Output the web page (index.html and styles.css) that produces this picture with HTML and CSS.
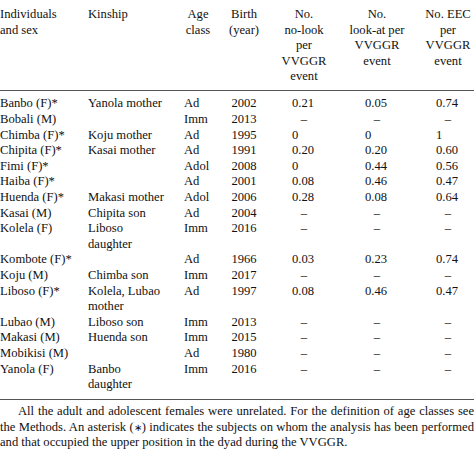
FILE: index.html
```html
<!DOCTYPE html>
<html lang="en">
<head>
<meta charset="utf-8">
<title>Table</title>
<link rel="stylesheet" href="styles.css">
</head>
<body>
<div class="page">
<table class="data">
  <colgroup>
    <col class="c1"><col class="c2"><col class="c3"><col class="c4"><col class="c5"><col class="c6"><col class="c7">
  </colgroup>
  <thead>
    <tr>
      <th class="left">Individuals<br>and sex</th>
      <th class="left">Kinship</th>
      <th>Age<br>class</th>
      <th>Birth<br>(year)</th>
      <th>No.<br>no-look<br>per<br>VVGGR<br>event</th>
      <th>No.<br>look-at per<br>VVGGR<br>event</th>
      <th>No. EEC<br>per<br>VVGGR<br>event</th>
    </tr>
  </thead>
  <tbody>
    <tr class="first">
      <td>Banbo (F)*</td><td>Yanola mother</td><td>Ad</td><td class="ctr">2002</td>
      <td class="ctr"><span class="num">0.21</span></td><td class="ctr"><span class="num">0.05</span></td><td class="ctr"><span class="num">0.74</span></td>
    </tr>
    <tr>
      <td>Bobali (M)</td><td></td><td>Imm</td><td class="ctr">2013</td>
      <td class="ctr"><span class="dash">–</span></td><td class="ctr"><span class="dash">–</span></td><td class="ctr"><span class="dash">–</span></td>
    </tr>
    <tr>
      <td>Chimba (F)*</td><td>Koju mother</td><td>Ad</td><td class="ctr">1995</td>
      <td class="ctr"><span class="num">0</span></td><td class="ctr"><span class="num">0</span></td><td class="ctr"><span class="num">1</span></td>
    </tr>
    <tr>
      <td>Chipita (F)*</td><td>Kasai mother</td><td>Ad</td><td class="ctr">1991</td>
      <td class="ctr"><span class="num">0.20</span></td><td class="ctr"><span class="num">0.20</span></td><td class="ctr"><span class="num">0.60</span></td>
    </tr>
    <tr>
      <td>Fimi (F)*</td><td></td><td>Adol</td><td class="ctr">2008</td>
      <td class="ctr"><span class="num">0</span></td><td class="ctr"><span class="num">0.44</span></td><td class="ctr"><span class="num">0.56</span></td>
    </tr>
    <tr>
      <td>Haiba (F)*</td><td></td><td>Ad</td><td class="ctr">2001</td>
      <td class="ctr"><span class="num">0.08</span></td><td class="ctr"><span class="num">0.46</span></td><td class="ctr"><span class="num">0.47</span></td>
    </tr>
    <tr>
      <td>Huenda (F)*</td><td>Makasi mother</td><td>Adol</td><td class="ctr">2006</td>
      <td class="ctr"><span class="num">0.28</span></td><td class="ctr"><span class="num">0.08</span></td><td class="ctr"><span class="num">0.64</span></td>
    </tr>
    <tr>
      <td>Kasai (M)</td><td>Chipita son</td><td>Ad</td><td class="ctr">2004</td>
      <td class="ctr"><span class="dash">–</span></td><td class="ctr"><span class="dash">–</span></td><td class="ctr"><span class="dash">–</span></td>
    </tr>
    <tr>
      <td>Kolela (F)</td><td>Liboso<br>daughter</td><td>Imm</td><td class="ctr">2016</td>
      <td class="ctr"><span class="dash">–</span></td><td class="ctr"><span class="dash">–</span></td><td class="ctr"><span class="dash">–</span></td>
    </tr>
    <tr>
      <td>Kombote (F)*</td><td></td><td>Ad</td><td class="ctr">1966</td>
      <td class="ctr"><span class="num">0.03</span></td><td class="ctr"><span class="num">0.23</span></td><td class="ctr"><span class="num">0.74</span></td>
    </tr>
    <tr>
      <td>Koju (M)</td><td>Chimba son</td><td>Imm</td><td class="ctr">2017</td>
      <td class="ctr"><span class="dash">–</span></td><td class="ctr"><span class="dash">–</span></td><td class="ctr"><span class="dash">–</span></td>
    </tr>
    <tr>
      <td>Liboso (F)*</td><td>Kolela, Lubao<br>mother</td><td>Ad</td><td class="ctr">1997</td>
      <td class="ctr"><span class="num">0.08</span></td><td class="ctr"><span class="num">0.46</span></td><td class="ctr"><span class="num">0.47</span></td>
    </tr>
    <tr>
      <td>Lubao (M)</td><td>Liboso son</td><td>Imm</td><td class="ctr">2013</td>
      <td class="ctr"><span class="dash">–</span></td><td class="ctr"><span class="dash">–</span></td><td class="ctr"><span class="dash">–</span></td>
    </tr>
    <tr>
      <td>Makasi (M)</td><td>Huenda son</td><td>Imm</td><td class="ctr">2015</td>
      <td class="ctr"><span class="dash">–</span></td><td class="ctr"><span class="dash">–</span></td><td class="ctr"><span class="dash">–</span></td>
    </tr>
    <tr>
      <td>Mobikisi (M)</td><td></td><td>Ad</td><td class="ctr">1980</td>
      <td class="ctr"><span class="dash">–</span></td><td class="ctr"><span class="dash">–</span></td><td class="ctr"><span class="dash">–</span></td>
    </tr>
    <tr class="last">
      <td>Yanola (F)</td><td>Banbo<br>daughter</td><td>Imm</td><td class="ctr">2016</td>
      <td class="ctr"><span class="dash">–</span></td><td class="ctr"><span class="dash">–</span></td><td class="ctr"><span class="dash">–</span></td>
    </tr>
  </tbody>
</table>
<p class="note">All the adult and adolescent females were unrelated. For the definition of age classes see the Methods. An asterisk (<span class="ast">∗</span>) indicates the subjects on whom the analysis has been performed and that occupied the upper position in the dyad during the VVGGR.</p>
</div>
</body>
</html>
```
FILE: styles.css
```css
html, body {
  margin: 0;
  padding: 0;
  background: #ffffff;
}

.page {
  width: 474px;
  font-family: "Liberation Serif", "Times New Roman", serif;
  font-size: 12.6px;
  line-height: 15.6px;
  color: #111111;
}

.data {
  width: 474px;
  table-layout: fixed;
  border-collapse: collapse;
}

.c1 { width: 88px; }
.c2 { width: 96px; }
.c3 { width: 28px; }
.c4 { width: 64px; }
.c5 { width: 56px; }
.c6 { width: 90px; }
.c7 { width: 52px; }

.data th {
  font-weight: normal;
  text-align: center;
  vertical-align: top;
  padding: 7px 0 5px 0;
  border-bottom: 1px solid #555;
  white-space: nowrap;
}

.data th.left {
  text-align: left;
}

.data td {
  padding: 0;
  text-align: left;
  vertical-align: top;
  white-space: nowrap;
}

.data td.ctr {
  text-align: center;
}

.data tr.first td {
  padding-top: 5.5px;
}

.data tr.last td {
  padding-bottom: 6px;
  border-bottom: 1px solid #555;
}

.num {
  display: inline-block;
  width: 24px;
  text-align: left;
}

.dash {
  display: inline-block;
  width: 24px;
  text-align: center;
}

.note {
  margin: 4.5px 0 0 0;
  text-indent: 18px;
  text-align: justify;
  line-height: 15.4px;
}

.ast {
  font-size: 0.8em;
}
```
